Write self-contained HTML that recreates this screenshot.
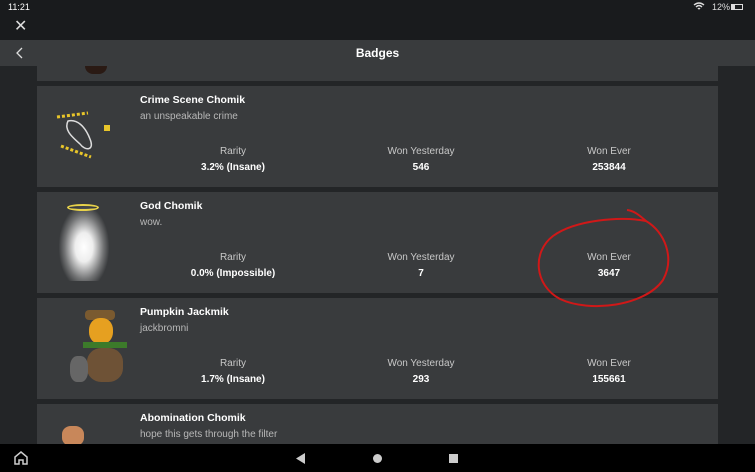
<!DOCTYPE html><html><head><style>
*{margin:0;padding:0;box-sizing:border-box}
html,body{width:755px;height:472px;overflow:hidden}
body{background:#232527;font-family:"Liberation Sans",sans-serif;position:relative}
.sb{position:absolute;left:0;top:0;width:755px;height:40px;background:#191b1d}
.hd{position:absolute;left:0;top:40px;width:755px;height:26px;background:#393b3d;color:#fff;font-size:12px;text-align:center;line-height:26px;font-weight:bold}
.card{position:absolute;left:37px;width:681px;height:101px;background:#393b3d;overflow:hidden}
.t{position:absolute;left:103px;top:8px;color:#fff;font-size:10.5px;font-weight:bold}
.d{position:absolute;left:103px;top:25px;color:#b8b8b8;font-size:10px}
.c{position:absolute;top:60px;width:160px;text-align:center;font-size:10px;color:#c8c8c8}
.c b{display:block;color:#fff;margin-top:5px;font-size:10px}
.nav{position:absolute;left:0;top:444px;width:755px;height:28px;background:#000}
</style></head><body>
<div class="sb">
<div style="position:absolute;left:8px;top:2px;color:#fff;font-size:9px">11:21</div>
<div style="position:absolute;left:14px;top:19px;color:#ddd;font-size:16px;line-height:16px">✕</div>
<div style="position:absolute;left:712px;top:2px;color:#ddd;font-size:9px">12%</div>
<div style="position:absolute;left:731px;top:4px;width:12px;height:6px;border:1px solid #ddd"><div style="width:3px;height:4px;background:#ddd"></div></div>
<svg style="position:absolute;left:693px;top:2px" width="12" height="9"><path d="M1 3Q6 -1 11 3M3 5Q6 2 9 5M5 7Q6 6 7 7" stroke="#ddd" fill="none" stroke-width="1.4"/></svg>
</div>
<div class="hd">Badges<svg style="position:absolute;left:16px;top:7px" width="8" height="12"><path d="M6 1L1 6L6 11" stroke="#ddd" fill="none" stroke-width="1.3"/></svg></div>
<div class="card" style="top:66px;height:15px"><div style="position:absolute;left:48px;top:0;width:22px;height:8px;background:#2a1a14;border-radius:0 0 10px 10px"></div></div>

<div class="card" style="top:86px"><div class="t">Crime Scene Chomik</div><div class="d">an unspeakable crime</div>
<svg style="position:absolute;left:18px;top:25px" width="60" height="60"><path d="M2 6L33 2M6 35L36 46" stroke="#e8c52a" stroke-width="3" stroke-dasharray="3 2"/><path d="M13 10C22 8 30 15 35 28C40 40 30 40 25 33C20 28 8 20 13 10Z" stroke="#ddd" fill="none" stroke-width="1.5"/><rect x="49" y="14" width="6" height="6" fill="#e8c52a"/></svg>
<div class="c" style="left:116px">Rarity<b>3.2% (Insane)</b></div><div class="c" style="left:304px">Won Yesterday<b>546</b></div><div class="c" style="left:492px">Won Ever<b>253844</b></div></div>

<div class="card" style="top:192px"><div class="t">God Chomik</div><div class="d">wow.</div>
<div style="position:absolute;left:22px;top:14px;width:50px;height:75px;background:radial-gradient(ellipse at 50% 55%,#fff 0,#eee 25%,rgba(200,200,200,.4) 55%,rgba(57,59,61,0) 72%)"></div>
<div style="position:absolute;left:30px;top:12px;width:32px;height:7px;border:2px solid #e8d24a;border-radius:50%"></div>
<div class="c" style="left:116px">Rarity<b>0.0% (Impossible)</b></div><div class="c" style="left:304px">Won Yesterday<b>7</b></div><div class="c" style="left:492px">Won Ever<b>3647</b></div></div>

<div class="card" style="top:298px"><div class="t">Pumpkin Jackmik</div><div class="d">jackbromni</div>
<div style="position:absolute;left:48px;top:12px;width:30px;height:10px;background:#7a5a30;border-radius:4px"></div>
<div style="position:absolute;left:52px;top:20px;width:24px;height:26px;background:#e6a020;border-radius:45%"></div>
<div style="position:absolute;left:46px;top:44px;width:44px;height:6px;background:#3c7a2a"></div>
<div style="position:absolute;left:50px;top:50px;width:36px;height:34px;background:#6e5236;border-radius:40%"></div>
<div style="position:absolute;left:33px;top:58px;width:18px;height:26px;background:#666;border-radius:40%"></div>
<div class="c" style="left:116px">Rarity<b>1.7% (Insane)</b></div><div class="c" style="left:304px">Won Yesterday<b>293</b></div><div class="c" style="left:492px">Won Ever<b>155661</b></div></div>

<div class="card" style="top:404px;height:40px"><div class="t">Abomination Chomik</div><div class="d">hope this gets through the filter</div>
<div style="position:absolute;left:25px;top:22px;width:22px;height:20px;background:#c8875a;border-radius:40%"></div></div>

<svg style="position:absolute;left:0;top:0" width="755" height="472"><path d="M646 221C620 216 575 220 553 236C532 252 534 285 560 299C590 313 645 306 663 280C675 258 665 232 646 221C640 216 635 211 627 210" stroke="#d01818" stroke-width="2" fill="none"/></svg>

<div class="nav">
<svg style="position:absolute;left:14px;top:7px" width="14" height="14"><path d="M1 13V6L7 1L13 6V13H9V9H5V13Z" stroke="#ccc" fill="none" stroke-width="1.5"/></svg>
<svg style="position:absolute;left:296px;top:9px" width="10" height="11"><path d="M9 0V11L0 5.5Z" fill="#ccc"/></svg>
<div style="position:absolute;left:373px;top:10px;width:9px;height:9px;border-radius:50%;background:#ccc"></div>
<div style="position:absolute;left:449px;top:10px;width:9px;height:9px;background:#ccc"></div>
</div>
</body></html>
